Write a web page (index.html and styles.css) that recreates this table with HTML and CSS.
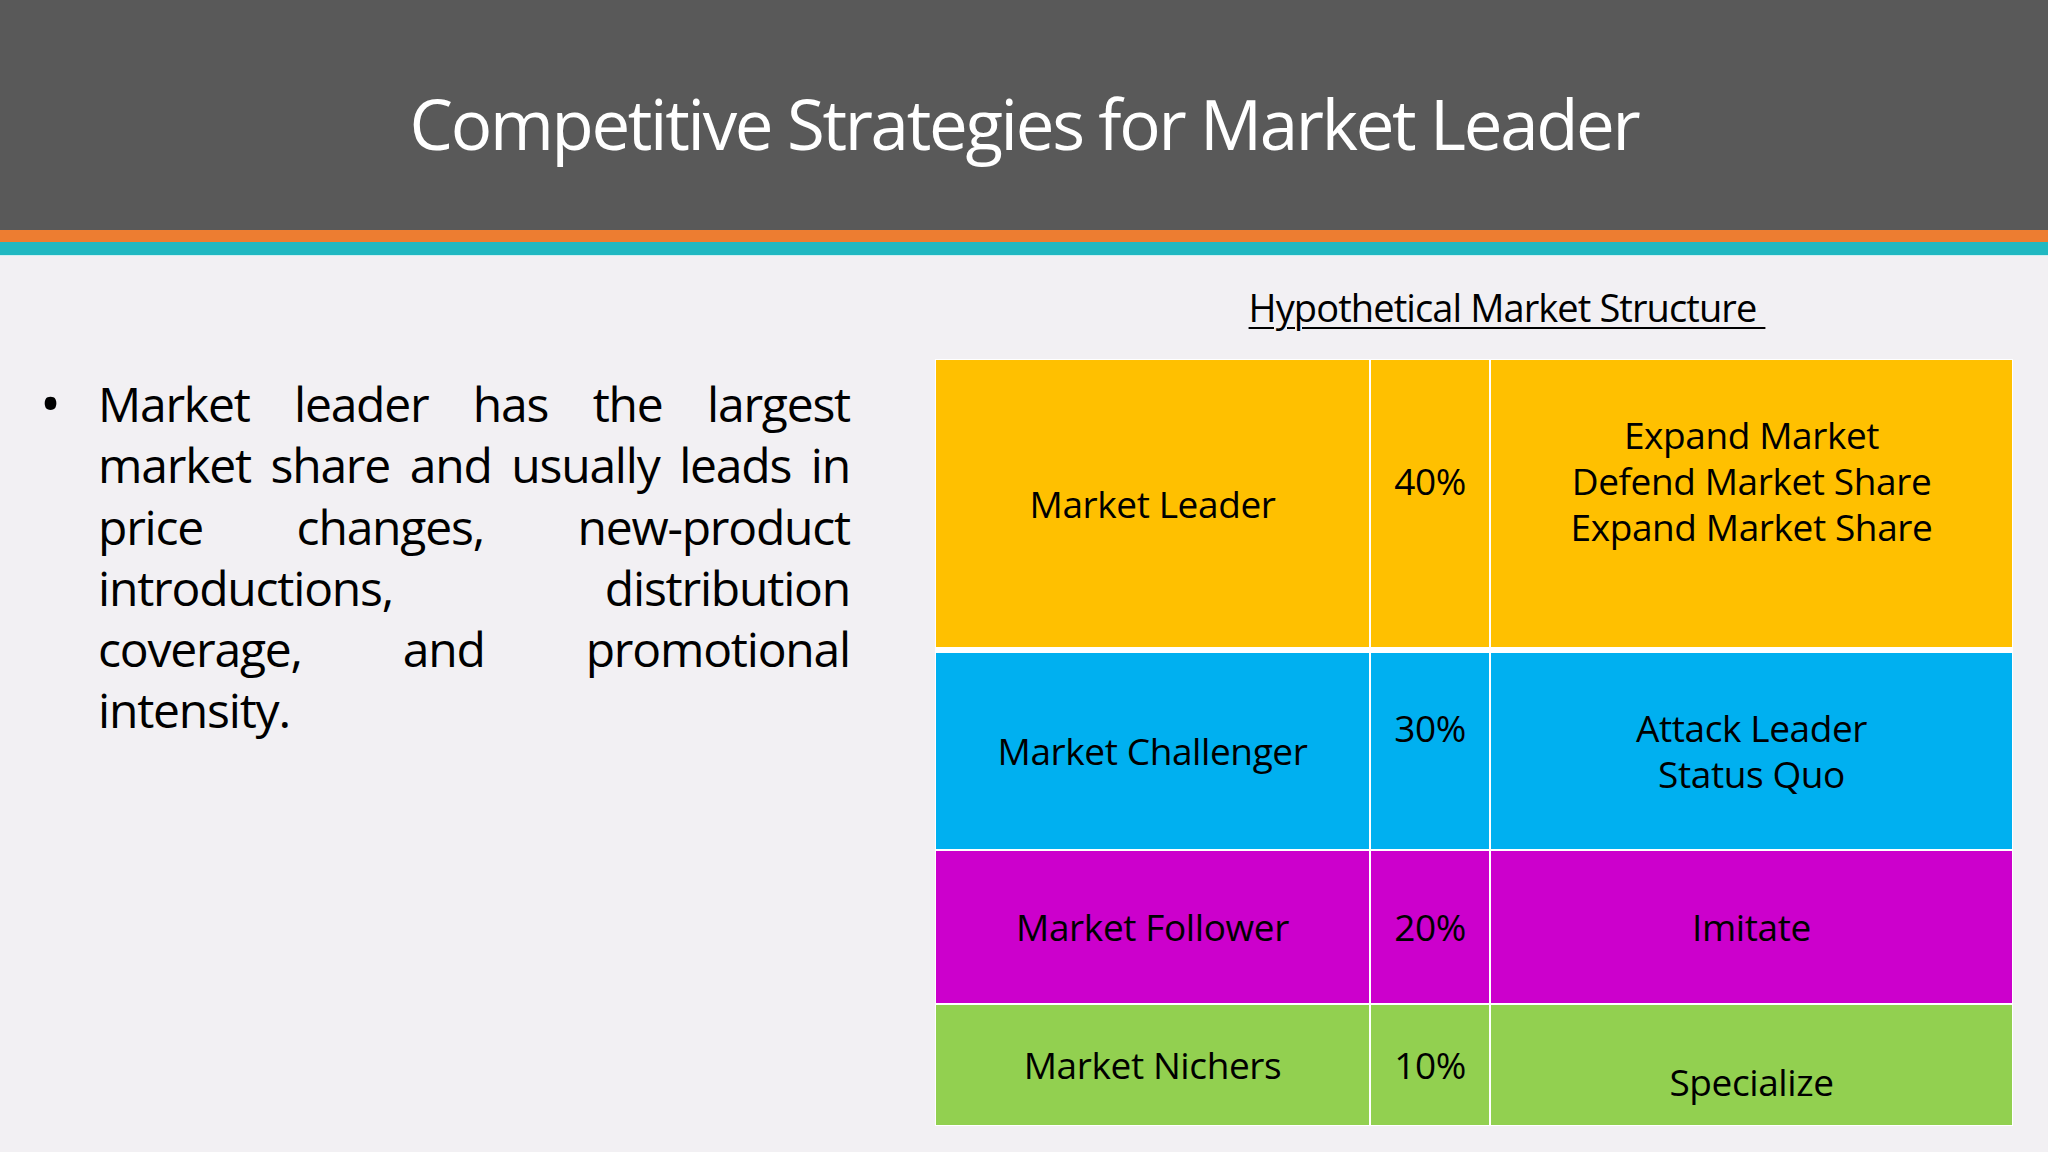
FILE: index.html
```html
<!DOCTYPE html>
<html lang="en">
<head>
<meta charset="utf-8">
<title>Competitive Strategies for Market Leader</title>
<link rel="stylesheet" href="styles.css">
</head>
<body>
<header class="header">
  <h1 class="title">Competitive Strategies for Market Leader</h1>
</header>
<div class="stripe-orange"></div>
<div class="stripe-teal"></div>
<main class="main">
  <section class="left">
    <div class="bullet-item">
      <span class="bullet">•</span>
      <div class="bullet-text">
        <span class="jline">Market leader has the largest</span>
        <span class="jline">market share and usually leads in</span>
        <span class="jline">price changes, new-product</span>
        <span class="jline">introductions, distribution</span>
        <span class="jline">coverage, and promotional</span>
        <span class="lastline">intensity.</span>
      </div>
    </div>
  </section>
  <section class="right">
    <div class="subtitle"><span class="u">Hypothetical Market Structure&nbsp;</span></div>
    <div class="table">
      <div class="row row-leader">
        <div class="cell">Market Leader</div>
        <div class="cell pad-bottom">40%</div>
        <div class="cell pad-bottom">Expand Market<br>Defend Market Share<br>Expand Market Share</div>
      </div>
      <div class="row row-challenger">
        <div class="cell">Market Challenger</div>
        <div class="cell pad-bottom">30%</div>
        <div class="cell">Attack Leader<br>Status Quo</div>
      </div>
      <div class="row row-follower">
        <div class="cell">Market Follower</div>
        <div class="cell">20%</div>
        <div class="cell">Imitate</div>
      </div>
      <div class="row row-nicher">
        <div class="cell">Market Nichers</div>
        <div class="cell">10%</div>
        <div class="cell pad-top">Specialize</div>
      </div>
    </div>
  </section>
</main>
</body>
</html>
```

FILE: styles.css
```css
html, body {
  margin: 0;
  padding: 0;
}
body {
  width: 2048px;
  height: 1152px;
  overflow: hidden;
  background: #f2f0f3;
  font-family: "Open Sans", "Noto Sans", sans-serif;
  color: #000;
}
.header {
  height: 230px;
  background: #595959;
  display: flex;
  align-items: center;
  justify-content: center;
  padding-top: 16px;
  box-sizing: border-box;
}
.title {
  margin: 0;
  color: #fff;
  font-weight: 400;
  font-size: 69px;
  letter-spacing: -2.3px;
  white-space: nowrap;
}
.stripe-orange {
  height: 12px;
  background: #ed7d31;
}
.stripe-teal {
  height: 13px;
  background: #20b8c1;
  border-bottom: 1px solid #cfeff1;
}
.main {
  display: flex;
  padding-left: 26px;
  gap: 85px;
}
.left {
  padding-top: 117px;
}
.bullet-item {
  display: flex;
  gap: 24px;
  font-size: 48px;
  line-height: 61.3px;
  letter-spacing: -1.2px;
}
.bullet {
  width: 48px;
  text-align: center;
  font-size: 56px;
  line-height: 58px;
}
.bullet-text {
  width: 752px;
}
.jline {
  display: block;
  text-align: justify;
  text-align-last: justify;
  white-space: nowrap;
}
.lastline {
  display: block;
}
.right {
  width: 1078px;
  padding-top: 25px;
}
.subtitle {
  text-align: center;
  padding-left: 66px;
  font-size: 38px;
  letter-spacing: -0.9px;
  height: 53px;
  line-height: 53px;
  margin-bottom: 25px;
}
.subtitle .u {
  text-decoration: underline;
  text-decoration-thickness: 2px;
  text-underline-offset: 5px;
}
.table {
  background: #fff;
  padding: 1px;
  display: flex;
  flex-direction: column;
  gap: 2px;
}
.row {
  display: grid;
  grid-template-columns: 433px 118px 521px;
  column-gap: 2px;
}
.row-leader { height: 287px; margin-bottom: 4px; }
.row-challenger { height: 196px; }
.row-follower { height: 152px; }
.row-nicher { height: 120px; }
.row-leader .cell { background: #ffc000; }
.row-challenger .cell { background: #00b0f0; }
.row-follower .cell { background: #cc00cc; }
.row-nicher .cell { background: #92d050; }
.cell {
  display: flex;
  align-items: center;
  justify-content: center;
  text-align: center;
  font-size: 37px;
  line-height: 46px;
  letter-spacing: -0.4px;
  box-sizing: border-box;
}
.pad-bottom { padding-bottom: 46px; }
.pad-top { padding-top: 34px; }
```
